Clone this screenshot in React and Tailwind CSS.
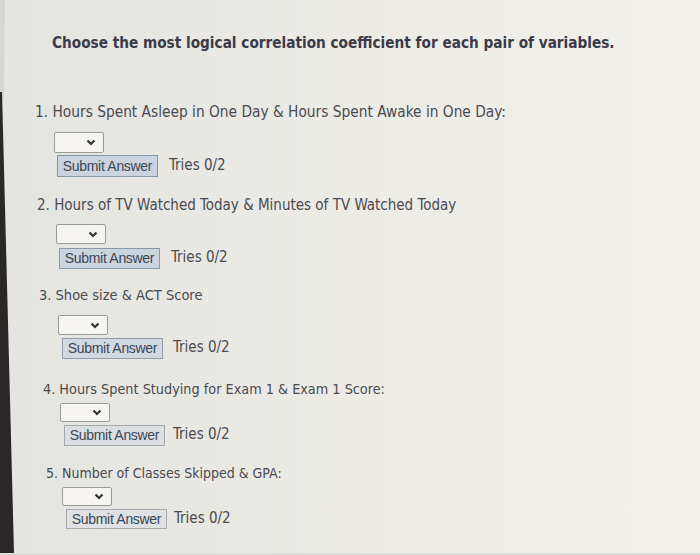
import React from 'react';

const questions = [
  {
    text: '1. Hours Spent Asleep in One Day & Hours Spent Awake in One Day:',
    row: 'pl-[35px] mt-[50px]',
    size: 'text-[15.3px]',
    sel: 'ml-[19px] mt-[10px] h-[21px]',
    btn: 'ml-[22px] mt-[2px] h-[22px] bg-[#cbd4de] border-[#8797a8]',
    tries: 'ml-[11px]',
  },
  {
    text: '2. Hours of TV Watched Today & Minutes of TV Watched Today',
    row: 'pl-[37px] mt-[18px]',
    size: 'text-[15px]',
    sel: 'ml-[19px] mt-[9px] h-[20px]',
    btn: 'ml-[22px] mt-[4px] h-[21px] bg-[#ccd4dd] border-[#8a98a8]',
    tries: 'ml-[11px]',
  },
  {
    text: '3. Shoe size & ACT Score',
    row: 'pl-[39px] mt-[16px]',
    size: 'text-[14.5px]',
    sel: 'ml-[19px] mt-[10px] h-[20px]',
    btn: 'ml-[23px] mt-[3px] h-[21px] bg-[#d2d9e0] border-[#919daa]',
    tries: 'ml-[10px]',
  },
  {
    text: '4. Hours Spent Studying for Exam 1 & Exam 1 Score:',
    row: 'pl-[43px] mt-[20px]',
    size: 'text-[14.3px]',
    sel: 'ml-[17px] mt-[4px] h-[19px]',
    btn: 'ml-[21px] mt-[3px] h-[21px] bg-[#dcdfe2] border-[#a3a8ad]',
    tries: 'ml-[8px]',
  },
  {
    text: '5. Number of Classes Skipped & GPA:',
    row: 'pl-[46px] mt-[17px]',
    size: 'text-[14px]',
    sel: 'ml-[16px] mt-[4px] h-[19px]',
    btn: 'ml-[20px] mt-[3px] h-[20px] bg-[#dfe1e2] border-[#a8abae]',
    tries: 'ml-[7px]',
  },
];

const condensed = '"DejaVu Sans Condensed", "DejaVu Sans", Verdana, sans-serif';

const Dropdown = ({ className }) => (
  <div className={`w-[50px] flex items-center justify-end pr-[7px] bg-[#f6f5f2] border border-[#9a9a9a] rounded-[2px] ${className}`}>
    <svg width="10" height="7" viewBox="0 0 10 7">
      <path d="M1.5 1.5 L5 5 L8.5 1.5" fill="none" stroke="#333" strokeWidth="2.2" />
    </svg>
  </div>
);

const Question = ({ q }) => (
  <div className={q.row}>
    <p className={`h-[20px] leading-[20px] text-[#4a4a50] whitespace-nowrap ${q.size}`} style={{ fontFamily: condensed }}>
      {q.text}
    </p>
    <Dropdown className={q.sel} />
    <div className="flex items-center">
      <button className={`w-[101px] border flex items-center justify-center text-[14px] text-[#3b4656] tracking-[-0.3px] ${q.btn}`} style={{ fontFamily: '"Liberation Sans", Arial, sans-serif' }}>
        Submit Answer
      </button>
      <span className={`text-[15px] text-[#4b4b4e] leading-[18px] ${q.tries}`} style={{ fontFamily: condensed }}>
        Tries 0/2
      </span>
    </div>
  </div>
);

export default function App() {
  return (
    <div className="relative w-[700px] h-[555px] overflow-hidden bg-gradient-to-r from-[#e4e4e0] via-[#ecebe6] to-[#f2f0ea] border-b-2 border-[#dcdcd8]">
      {/* monitor bezel edge, lower left */}
      <svg className="absolute left-0 top-0" width="20" height="555" viewBox="0 0 20 555">
        <polygon points="0,0 5,0 4,100 0,100" fill="#d6d6d3" />
        <polygon points="0,92 2,92 14,553 0,553" fill="#2b2729" />
      </svg>

      <h1 className="pl-[52px] pt-[34px] h-[52px] leading-[18px] text-[15.2px] font-bold text-[#3a3a48] whitespace-nowrap" style={{ fontFamily: condensed }}>
        Choose the most logical correlation coefficient for each pair of variables.
      </h1>

      {questions.map((q) => (
        <Question key={q.text} q={q} />
      ))}
    </div>
  );
}
